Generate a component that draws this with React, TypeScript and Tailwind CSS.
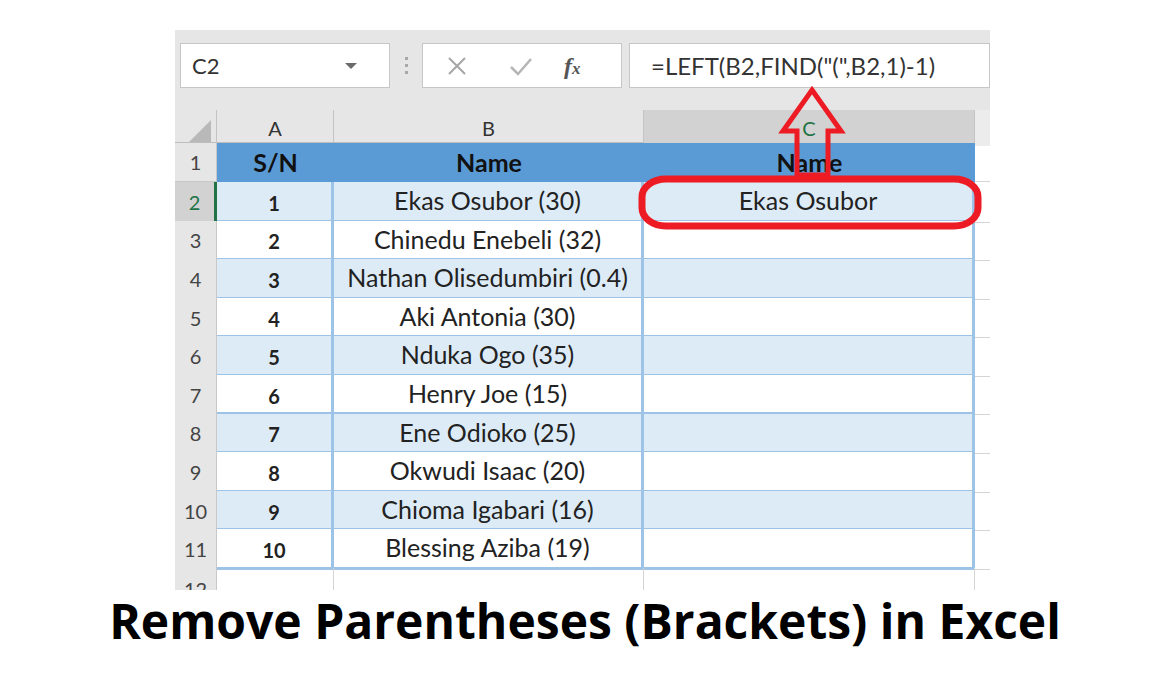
const people = [
  { sn: '1', name: 'Ekas Osubor (30)' },
  { sn: '2', name: 'Chinedu Enebeli (32)' },
  { sn: '3', name: 'Nathan Olisedumbiri (0.4)' },
  { sn: '4', name: 'Aki Antonia (30)' },
  { sn: '5', name: 'Nduka Ogo (35)' },
  { sn: '6', name: 'Henry Joe (15)' },
  { sn: '7', name: 'Ene Odioko (25)' },
  { sn: '8', name: 'Okwudi Isaac (20)' },
  { sn: '9', name: 'Chioma Igabari (16)' },
  { sn: '10', name: 'Blessing Aziba (19)' },
];

const cols = 'grid grid-cols-[42px_117px_310px_331px_15px]';
const font = { fontFamily: 'Lato, "Open Sans", sans-serif' };

export default function App() {
  return (
    <div className="relative h-[700px] w-[1170px] overflow-hidden bg-white" style={font}>
      <div className="ml-[175px] w-[815px] pt-[30px]">
        <div className="h-[560px] overflow-hidden">
          {/* formula bar */}
          <div className="flex h-[80px] items-start bg-[#e6e6e6] pt-[13px]">
            <div className="ml-[5px] flex h-[45px] w-[210px] items-center justify-between border border-[#c6c6c6] bg-white pl-[11px] pr-[32px] text-[22px] text-[#333]">
              <span>C2</span>
              <span className="h-0 w-0 border-x-[6px] border-t-[6px] border-x-transparent border-t-[#6b6b6b]" />
            </div>
            <div className="flex h-[45px] w-[32px] flex-col items-center justify-center gap-[4px]">
              <span className="h-[3px] w-[3px] bg-[#a8a8a8]" />
              <span className="h-[3px] w-[3px] bg-[#a8a8a8]" />
              <span className="h-[3px] w-[3px] bg-[#a8a8a8]" />
            </div>
            <div className="flex h-[45px] w-[200px] items-center border border-[#c6c6c6] bg-white">
              <svg width="22" height="22" viewBox="0 0 22 22" className="ml-[23px]">
                <path d="M3 3 L19 19 M19 3 L3 19" stroke="#a6a6a6" strokeWidth="2" />
              </svg>
              <svg width="26" height="22" viewBox="0 0 26 22" className="ml-[40px]">
                <path d="M3 12 L10 19 L23 4" stroke="#b5b5b5" strokeWidth="2.5" fill="none" />
              </svg>
              <span
                className="ml-[30px] text-[24px] font-bold italic text-[#555]"
                style={{ fontFamily: '"Liberation Serif", serif' }}
              >
                f<span className="text-[17px]">x</span>
              </span>
            </div>
            <div className="ml-[7px] flex h-[45px] flex-1 items-center border border-[#c6c6c6] bg-white pl-[21px] text-[24px] text-[#333]">
              =LEFT(B2,FIND("(",B2,1)-1)
            </div>
          </div>

          {/* column headers */}
          <div className={`${cols} h-[33px] border-b border-[#bdbdbd] bg-[#e6e6e6] text-[20px] text-[#333]`}>
            <div className="relative border-r border-[#c4c4c4]">
              <span className="absolute bottom-[4px] right-[5px] h-0 w-0 border-b-[22px] border-l-[22px] border-b-[#b9b9b9] border-l-transparent" />
            </div>
            <div className="flex items-center justify-center border-r border-[#c4c4c4]">A</div>
            <div className="flex items-center justify-center border-r border-[#c4c4c4]">B</div>
            <div className="flex items-center justify-center border-b-[3px] border-r border-b-[#217346] border-r-[#c4c4c4] bg-[#d2d2d2] pt-[3px] text-[#217346]">
              C
            </div>
            <div className="bg-[#ececec]" />
          </div>

          {/* header row 1 */}
          <div className={`${cols} h-[39px] text-[25px]`}>
            <div className="flex items-center justify-center border-b border-r border-[#c8c8c8] bg-[#e6e6e6] text-[20px] text-[#444]">
              1
            </div>
            <div className="flex items-center justify-center bg-[#5b9bd5] font-bold text-[#111]">S/N</div>
            <div className="flex items-center justify-center bg-[#5b9bd5] font-bold text-[#111]">Name</div>
            <div className="flex items-center justify-center bg-[#5b9bd5] font-bold text-[#111]">Name</div>
            <div className="border-b border-[#d4d4d4]" />
          </div>

          {people.map((p, i) => {
            const row = i + 2;
            const shaded = row % 2 === 0;
            const bg = shaded ? 'bg-[#ddebf7]' : 'bg-white';
            const selected = row === 2;
            return (
              <div key={p.sn} className={`${cols} h-[38.6px] text-[25px] text-[#222]`}>
                <div
                  className={`flex items-center justify-center border-b border-[#c8c8c8] text-[20px] ${
                    selected
                      ? 'border-r-[3px] border-r-[#217346] bg-[#d2d2d2] text-[#217346]'
                      : 'border-r border-r-[#c8c8c8] bg-[#e6e6e6] text-[#444]'
                  }`}
                >
                  {row}
                </div>
                <div className={`flex items-center justify-center border-b-[3px] border-r-[3px] border-[#9dc3e6] pt-[4px] text-[20px] font-bold ${bg}`}>
                  {p.sn}
                </div>
                <div className={`flex items-center justify-center border-b-[3px] border-r-[3px] border-[#9dc3e6] ${bg}`}>
                  {p.name}
                </div>
                <div className={`flex items-center justify-center border-b-[3px] border-r-[3px] border-[#9dc3e6] ${bg}`}>
                  {selected ? 'Ekas Osubor' : ''}
                </div>
                <div className="border-b border-[#d4d4d4]" />
              </div>
            );
          })}

          {/* row 12, cut off */}
          <div className={`${cols} h-[39px]`}>
            <div className="flex items-start justify-center border-r border-[#c8c8c8] bg-[#e6e6e6] pt-[6px] text-[20px] text-[#444]">
              12
            </div>
            <div className="border-r border-[#d4d4d4]" />
            <div className="border-r border-[#d4d4d4]" />
            <div className="border-r border-[#d4d4d4]" />
            <div />
          </div>
        </div>
      </div>

      <h1
        className="mt-[3px] text-center text-[48px] font-bold leading-[56px] text-black"
        style={{ fontFamily: '"Open Sans", sans-serif' }}
      >
        Remove Parentheses (Brackets) in Excel
      </h1>

      {/* red annotation */}
      <svg
        className="pointer-events-none absolute left-0 top-0"
        width="1170"
        height="700"
        viewBox="0 0 1170 700"
      >
        <path
          d="M812 90 L841 131 L828 131 L828 175 L797 175 L797 131 L783 131 Z"
          fill="none"
          stroke="#ed1c24"
          strokeWidth="5"
          strokeLinejoin="miter"
        />
        <rect x="642" y="179" width="336" height="47" rx="24" ry="18" fill="none" stroke="#ed1c24" strokeWidth="7" />
      </svg>
    </div>
  );
}
